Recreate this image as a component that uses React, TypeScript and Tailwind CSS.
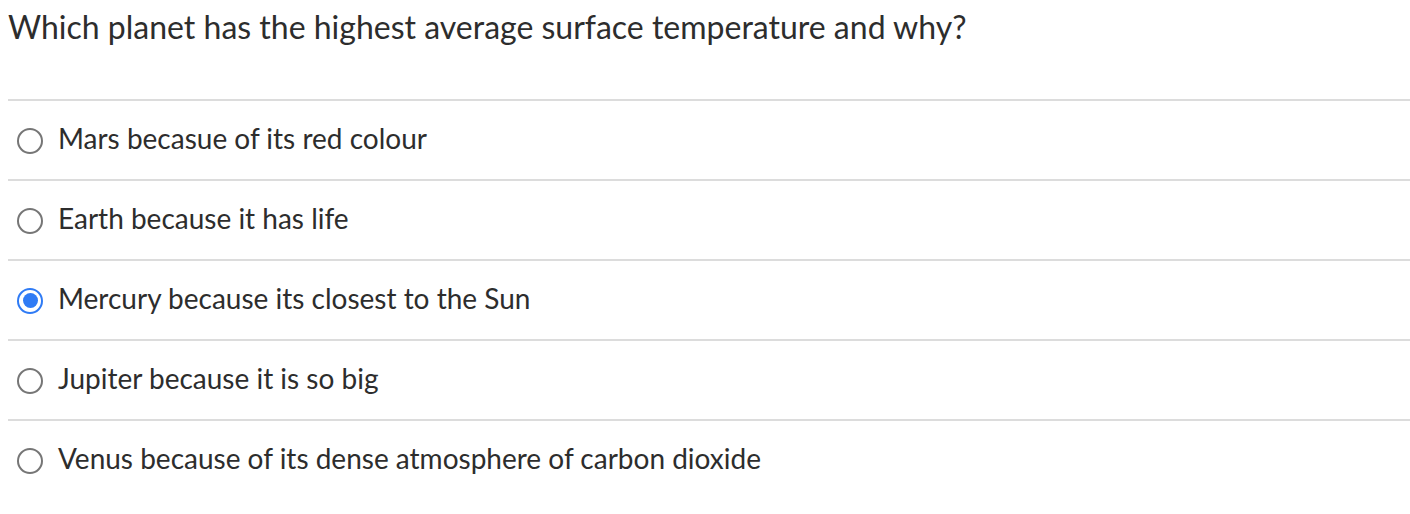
import React, { useState } from 'react';

const options = [
  'Mars becasue of its red colour',
  'Earth because it has life',
  'Mercury because its closest to the Sun',
  'Jupiter because it is so big',
  'Venus because of its dense atmosphere of carbon dioxide',
];

export default function App() {
  const [selected, setSelected] = useState(2);

  return (
    <div className="min-h-[514px] bg-white pl-2 text-[#2d2d2d]" style={{ fontFamily: 'Lato, "Noto Sans", sans-serif' }}>
      <h1 className="h-[99px] pt-[8px] text-[32px] leading-[38px] font-normal">
        Which planet has the highest average surface temperature and why?
      </h1>
      <div className="flex flex-col">
        {options.map((label, i) => {
          const checked = selected === i;
          return (
            <label
              key={label}
              onClick={() => setSelected(i)}
              className="flex h-[80px] cursor-pointer items-center gap-[15px] border-t-2 border-[#dcdcdc] pl-[9px]"
            >
              {checked ? (
                <span className="mt-[1px] flex h-[26px] w-[26px] shrink-0 items-center justify-center rounded-full border-2 border-[#2f7bf5] bg-white">
                  <span className="h-[15px] w-[15px] rounded-full bg-[#2f7bf5]" />
                </span>
              ) : (
                <span className="mt-[1px] h-[26px] w-[26px] shrink-0 rounded-full border-2 border-[#767676] bg-white" />
              )}
              <span className="mb-[5px] text-[28px] leading-[34px]">{label}</span>
            </label>
          );
        })}
      </div>
    </div>
  );
}
